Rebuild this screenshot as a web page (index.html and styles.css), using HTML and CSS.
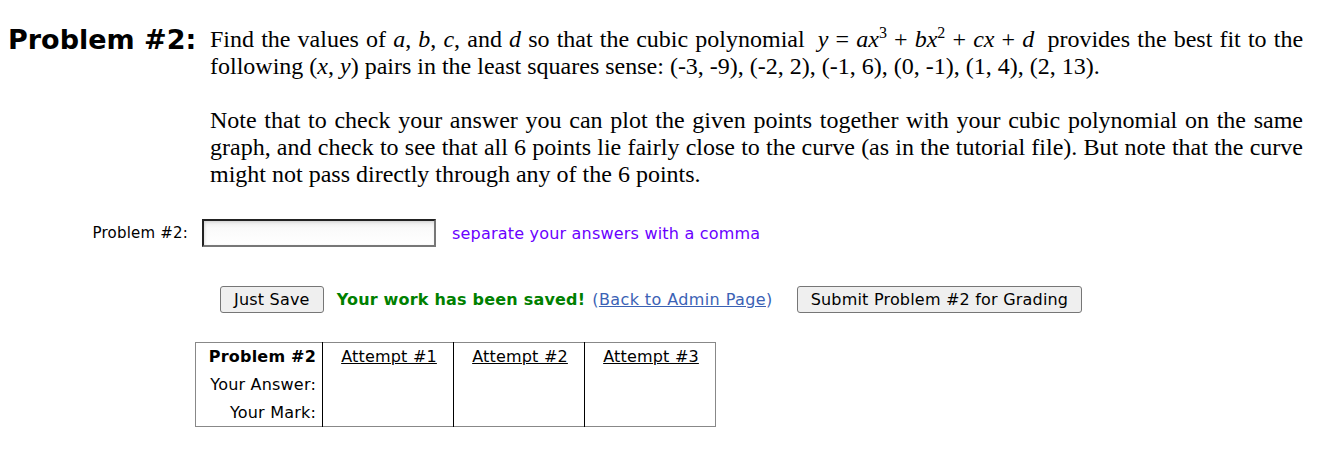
FILE: index.html
```html
<!DOCTYPE html>
<html lang="en">
<head>
    <meta charset="UTF-8">
    <title>Problem #2</title>
    <link rel="stylesheet" href="styles.css">
</head>
<body>
    <div class="problem">
        <div class="problem-title">Problem #2:</div>
        <div class="problem-text">
            <p>Find the values of <i>a</i>, <i>b</i>, <i>c</i>, and <i>d</i> so that the cubic polynomial <span class="math"><i>y</i> = <i>ax</i><sup>3</sup> + <i>bx</i><sup>2</sup> + <i>cx</i> + <i>d</i></span> provides the best fit to the following (<i>x</i>, <i>y</i>) pairs in the least squares sense: (-3, -9), (-2, 2), (-1, 6), (0, -1), (1, 4), (2, 13).</p>
            <p>Note that to check your answer you can plot the given points together with your cubic polynomial on the same graph, and check to see that all 6 points lie fairly close to the curve (as in the tutorial file). But note that the curve might not pass directly through any of the 6 points.</p>
        </div>
    </div>

    <div class="answer-row">
        <label class="answer-label" for="answer">Problem #2:</label>
        <input type="text" id="answer" class="answer-input">
        <span class="hint">separate your answers with a comma</span>
    </div>

    <div class="actions">
        <button class="btn">Just Save</button>
        <span class="saved">Your work has been saved!</span>
        <span class="admin">(<a href="#">Back to Admin Page</a>)</span>
        <button class="btn btn-submit">Submit Problem #2 for Grading</button>
    </div>

    <table class="attempts">
        <tr>
            <th>Problem #2</th>
            <td><a href="#">Attempt #1</a></td>
            <td><a href="#">Attempt #2</a></td>
            <td><a href="#">Attempt #3</a></td>
        </tr>
        <tr>
            <th class="sub">Your Answer:</th>
            <td></td><td></td><td></td>
        </tr>
        <tr>
            <th class="sub">Your Mark:</th>
            <td></td><td></td><td></td>
        </tr>
    </table>
</body>
</html>
```

FILE: styles.css
```css
body {
    margin: 8px;
    padding-top: 18px;
    font-family: "DejaVu Sans", Verdana, sans-serif;
    font-size: 16px;
    letter-spacing: 0.2px;
    color: #000;
    background: #fff;
}
.problem {
    display: flex;
    align-items: flex-start;
    margin-right: 10px;
}
.problem-title {
    width: 202px;
    flex-shrink: 0;
    font-size: 27px;
    font-weight: bold;
    letter-spacing: 0;
    line-height: 27px;
}
.problem-text {
    flex: 1;
    font-family: "Liberation Serif", "Times New Roman", serif;
    font-size: 24px;
    letter-spacing: 0;
    line-height: 27px;
    text-align: justify;
}
.problem-text p {
    margin: 0 0 27px 0;
}
.problem-text sup {
    font-size: 16px;
    line-height: 0;
    vertical-align: 9px;
}
.math {
    margin: 0 6px;
}
.answer-row {
    display: flex;
    align-items: center;
    margin-top: 4px;
}
.answer-label {
    width: 180px;
    font-size: 15px;
    text-align: right;
    margin-right: 14px;
}
.answer-input {
    width: 230px;
    height: 24px;
    box-sizing: content-box;
    padding: 0;
    border: 2px solid;
    border-color: #222 #777 #777 #222;
    background: linear-gradient(#ececec, #fafafa 30%, #fff);
    box-shadow: inset 1px 1px 3px rgba(0, 0, 0, 0.12);
}
.hint {
    margin-left: 16px;
    color: #6a00ff;
}
.actions {
    display: flex;
    align-items: center;
    margin: 39px 0 0 212px;
}
.btn {
    font-family: "DejaVu Sans", Verdana, sans-serif;
    font-size: 16px;
    letter-spacing: 0.2px;
    color: #000;
    background: #efefef;
    border: 1px solid #767676;
    border-radius: 3px;
    height: 27px;
    padding: 0 13px;
}
.saved {
    margin-left: 13px;
    color: #008000;
    font-weight: bold;
}
.admin {
    margin-left: 7px;
    color: #3b62b5;
    letter-spacing: 0.4px;
}
.admin a {
    color: #3b62b5;
}
.btn-submit {
    margin-left: 24px;
}
.attempts {
    margin: 29px 0 0 187px;
    border-collapse: collapse;
    border: 1px solid #888;
}
.attempts th,
.attempts td {
    height: 27px;
    padding: 0 6px 0 8px;
    border-left: 1px solid #000;
    vertical-align: middle;
}
.attempts th {
    text-align: right;
    border-left: none;
    width: 112px;
}
.attempts th.sub {
    font-weight: normal;
}
.attempts tr:nth-child(2) th,
.attempts tr:nth-child(2) td {
    height: 29px;
}
.attempts td {
    width: 116px;
    text-align: center;
}
.attempts a {
    color: #000;
}
```
